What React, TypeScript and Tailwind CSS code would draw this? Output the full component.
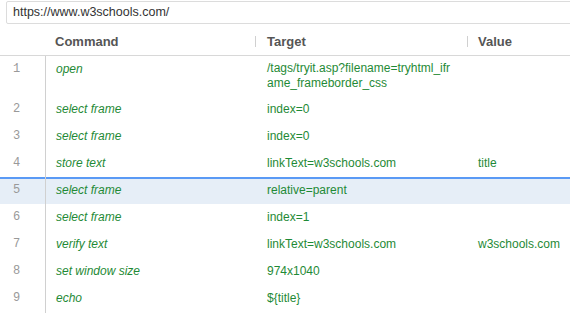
const rows = [
  { n: 1, cmd: "open", target: "/tags/tryit.asp?filename=tryhtml_iframe_frameborder_css", value: "" },
  { n: 2, cmd: "select frame", target: "index=0", value: "" },
  { n: 3, cmd: "select frame", target: "index=0", value: "" },
  { n: 4, cmd: "store text", target: "linkText=w3schools.com", value: "title" },
  { n: 5, cmd: "select frame", target: "relative=parent", value: "", selected: true },
  { n: 6, cmd: "select frame", target: "index=1", value: "" },
  { n: 7, cmd: "verify text", target: "linkText=w3schools.com", value: "w3schools.com" },
  { n: 8, cmd: "set window size", target: "974x1040", value: "" },
  { n: 9, cmd: "echo", target: "${title}", value: "" },
]

const App = () => {
  return (
    <div className="w-[570px] h-[313px] overflow-hidden bg-white font-['Liberation_Sans',Arial,sans-serif]">
      {/* Base URL */}
      <div className="pt-px pl-[6px]">
        <div className="w-[600px] h-[23px] border border-[#dcdcdc] rounded-[2px] flex items-center pl-[6px] text-[12.5px] text-[#333]">
          https://www.w3schools.com/
        </div>
      </div>

      {/* Header */}
      <div className="grid grid-cols-[45px_210px_212px_1fr] h-[32px] border-b border-[#d8d8d8] items-center text-[13px] font-bold text-[#555]">
        <div />
        <div className="pl-[10px] pt-[4px]">Command</div>
        <div className="flex items-center pt-[4px]">
          <span className="w-px h-[11px] bg-[#d0d0d0] mr-[11px]" />
          Target
        </div>
        <div className="flex items-center pt-[4px]">
          <span className="w-px h-[11px] bg-[#d0d0d0] mr-[10px]" />
          Value
        </div>
      </div>

      {/* Rows */}
      <div>
        {rows.map(row => (
          <div
            key={row.n}
            className={
              row.selected
                ? "grid grid-cols-[45px_210px_212px_1fr] h-[27px] bg-[#e6eef7] shadow-[inset_0_2px_0_#5a9af5] text-[12px] leading-[15px] text-[#1f8a36]"
                : row.n === 1
                  ? "grid grid-cols-[45px_210px_212px_1fr] h-[40px] text-[12px] leading-[15px] text-[#1f8a36]"
                  : "grid grid-cols-[45px_210px_212px_1fr] h-[27px] text-[12px] leading-[15px] text-[#1f8a36]"
            }
          >
            <div
              className={
                row.n === 1
                  ? "pl-[13px] pt-[6px] font-['Liberation_Mono',monospace] text-[12px] text-[#999]"
                  : "pl-[13px] flex items-center font-['Liberation_Mono',monospace] text-[12px] text-[#999]"
              }
            >
              {row.n}
            </div>
            <div className={row.n === 1 ? "border-l border-[#d0d0d0] pl-[10px] pt-[6px] italic" : "border-l border-[#d0d0d0] pl-[10px] flex items-center italic"}>
              {row.cmd}
            </div>
            <div className={row.n === 1 ? "pl-[12px] pt-[5px] pr-[14px] break-all" : "pl-[12px] flex items-center"}>
              {row.target}
            </div>
            <div className="pl-[11px] flex items-center">{row.value}</div>
          </div>
        ))}
        <div className="grid grid-cols-[45px_1fr] h-[20px]">
          <div />
          <div className="border-l border-[#d0d0d0]" />
        </div>
      </div>
    </div>
  )
}

export default App
